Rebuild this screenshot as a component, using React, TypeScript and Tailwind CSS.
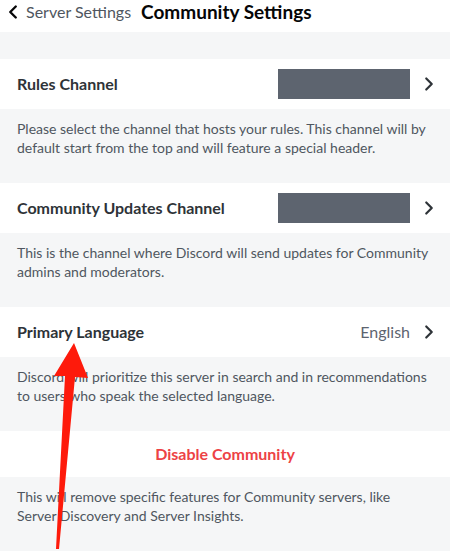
import { ChevronLeft, ChevronRight } from "lucide-react";

const font = { fontFamily: "Lato, 'Open Sans', sans-serif" };

function Row({ label, right }: { label: string; right: React.ReactNode }) {
  return (
    <div className="flex items-center h-[50px] bg-white pl-[17px] pr-[10px]">
      <span className="flex-1 text-[16px] font-bold text-[#2e3338]">{label}</span>
      {right}
      <ChevronRight className="w-[22px] h-[22px] ml-[8px] text-[#2e3338]" strokeWidth={2.4} />
    </div>
  );
}

function Note({ children }: { children: React.ReactNode }) {
  return (
    <div className="px-[17px] pt-[10px] pb-[26px] text-[14px] leading-[19px] text-[#4f5660]">
      {children}
    </div>
  );
}

const Redacted = () => <div className="w-[132px] h-[30px] bg-[#5d646f]" />;

export default function App() {
  return (
    <div className="relative w-[450px] h-[551px] overflow-hidden bg-[#f5f6f7]" style={font}>
      {/* Header */}
      <div className="flex items-center h-[32px] bg-white pl-[2px] pb-[10px] pt-[2px]">
        <ChevronLeft className="w-[22px] h-[22px] text-[#060607]" strokeWidth={2.6} />
        <span className="ml-[2px] text-[16px] text-[#4f5660]">Server Settings</span>
        <span className="ml-[10px] text-[19px] font-bold text-[#060607]">Community Settings</span>
      </div>

      <div className="h-[27px]" />

      <Row label="Rules Channel" right={<Redacted />} />
      <Note>
        Please select the channel that hosts your rules. This channel will by default start from the top and will
        feature a special header.
      </Note>

      <Row label="Community Updates Channel" right={<Redacted />} />
      <Note>This is the channel where Discord will send updates for Community admins and moderators.</Note>

      <Row label="Primary Language" right={<span className="text-[16px] text-[#5d646f]">English</span>} />
      <Note>
        Discord will prioritize this server in search and in recommendations to users who speak the selected
        language.
      </Note>

      <div className="flex items-center justify-center h-[46px] bg-white text-[16px] font-bold text-[#ed4245]">
        Disable Community
      </div>
      <Note>This will remove specific features for Community servers, like Server Discovery and Server Insights.</Note>

      {/* annotation arrow */}
      <svg className="absolute left-0 top-0 pointer-events-none" width="450" height="551" viewBox="0 0 450 551">
        <polygon points="74,343 54,376 65,376 56,549 59,549 75,377 88,378" fill="#fe1a0b" />
      </svg>
    </div>
  );
}
